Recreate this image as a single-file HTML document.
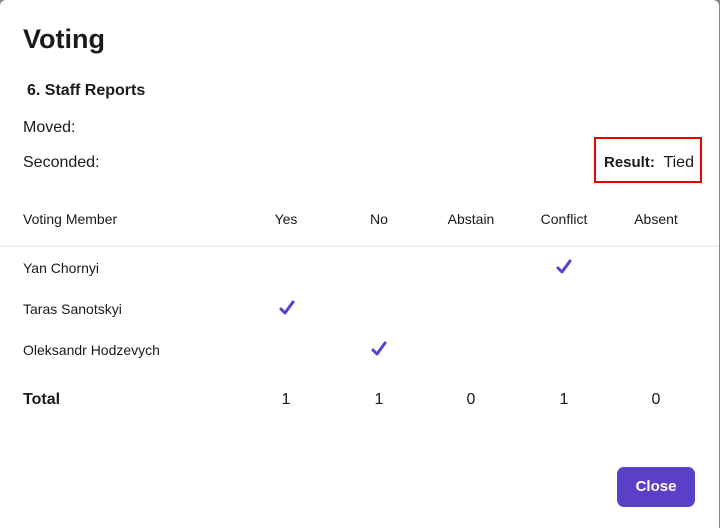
<!DOCTYPE html><html><head><style>
body{margin:0;width:720px;height:528px;background:#8a8a8a;overflow:hidden;font-family:"Liberation Sans",sans-serif;color:#1a1a1a}
.d{position:absolute;left:0;top:0;width:719px;height:528px;background:#fff;border-radius:6px 6px 0 0}
.t{position:absolute;white-space:nowrap}
.c{position:absolute;width:80px;text-align:center;font-size:14px}
.chk{position:absolute;width:16px;height:15px}
</style></head><body><div class="d">
<div class="t" style="left:23px;top:24px;font-size:27px;font-weight:bold">Voting</div>
<div class="t" style="left:27px;top:82px;font-size:16px;font-weight:bold">6. Staff Reports</div>
<div class="t" style="left:23px;top:119px;font-size:16px">Moved:</div>
<div class="t" style="left:23px;top:154px;font-size:16px">Seconded:</div>
<div style="position:absolute;left:594px;top:137px;width:108px;height:46px;border:2px solid #e00;box-sizing:border-box"></div>
<div class="t" style="left:604px;top:154px;font-size:16px"><b style="font-size:15px">Result:</b>&nbsp; Tied</div>
<div class="t" style="left:23px;top:211px;font-size:14px">Voting Member</div>
<div class="c" style="left:246px;top:211px">Yes</div>
<div class="c" style="left:339px;top:211px">No</div>
<div class="c" style="left:431px;top:211px">Abstain</div>
<div class="c" style="left:524px;top:211px">Conflict</div>
<div class="c" style="left:616px;top:211px">Absent</div>
<div style="position:absolute;left:0;top:245px;width:719px;height:2px;background:#efefef"></div>
<div class="t" style="left:23px;top:260px;font-size:14px">Yan Chornyi</div>
<div class="t" style="left:23px;top:301px;font-size:14px">Taras Sanotskyi</div>
<div class="t" style="left:23px;top:342px;font-size:14px">Oleksandr Hodzevych</div>
<svg class="chk" style="left:556px;top:259px" viewBox="0 0 16 15"><path d="M2 9l4 4 8-11" fill="none" stroke="#5a3fd0" stroke-width="3" stroke-linecap="round" stroke-linejoin="round"/></svg>
<svg class="chk" style="left:279px;top:300px" viewBox="0 0 16 15"><path d="M2 9l4 4 8-11" fill="none" stroke="#5a3fd0" stroke-width="3" stroke-linecap="round" stroke-linejoin="round"/></svg>
<svg class="chk" style="left:371px;top:341px" viewBox="0 0 16 15"><path d="M2 9l4 4 8-11" fill="none" stroke="#5a3fd0" stroke-width="3" stroke-linecap="round" stroke-linejoin="round"/></svg>
<div class="t" style="left:23px;top:391px;font-size:16px;font-weight:bold">Total</div>
<div class="c" style="left:246px;top:391px;font-size:16px">1</div>
<div class="c" style="left:339px;top:391px;font-size:16px">1</div>
<div class="c" style="left:431px;top:391px;font-size:16px">0</div>
<div class="c" style="left:524px;top:391px;font-size:16px">1</div>
<div class="c" style="left:616px;top:391px;font-size:16px">0</div>
<div style="position:absolute;left:617px;top:467px;width:78px;height:40px;background:#5a3fc8;border-radius:7px;color:#fff;font-size:15px;font-weight:bold;text-align:center;line-height:40px">Close</div>
</div></body></html>
